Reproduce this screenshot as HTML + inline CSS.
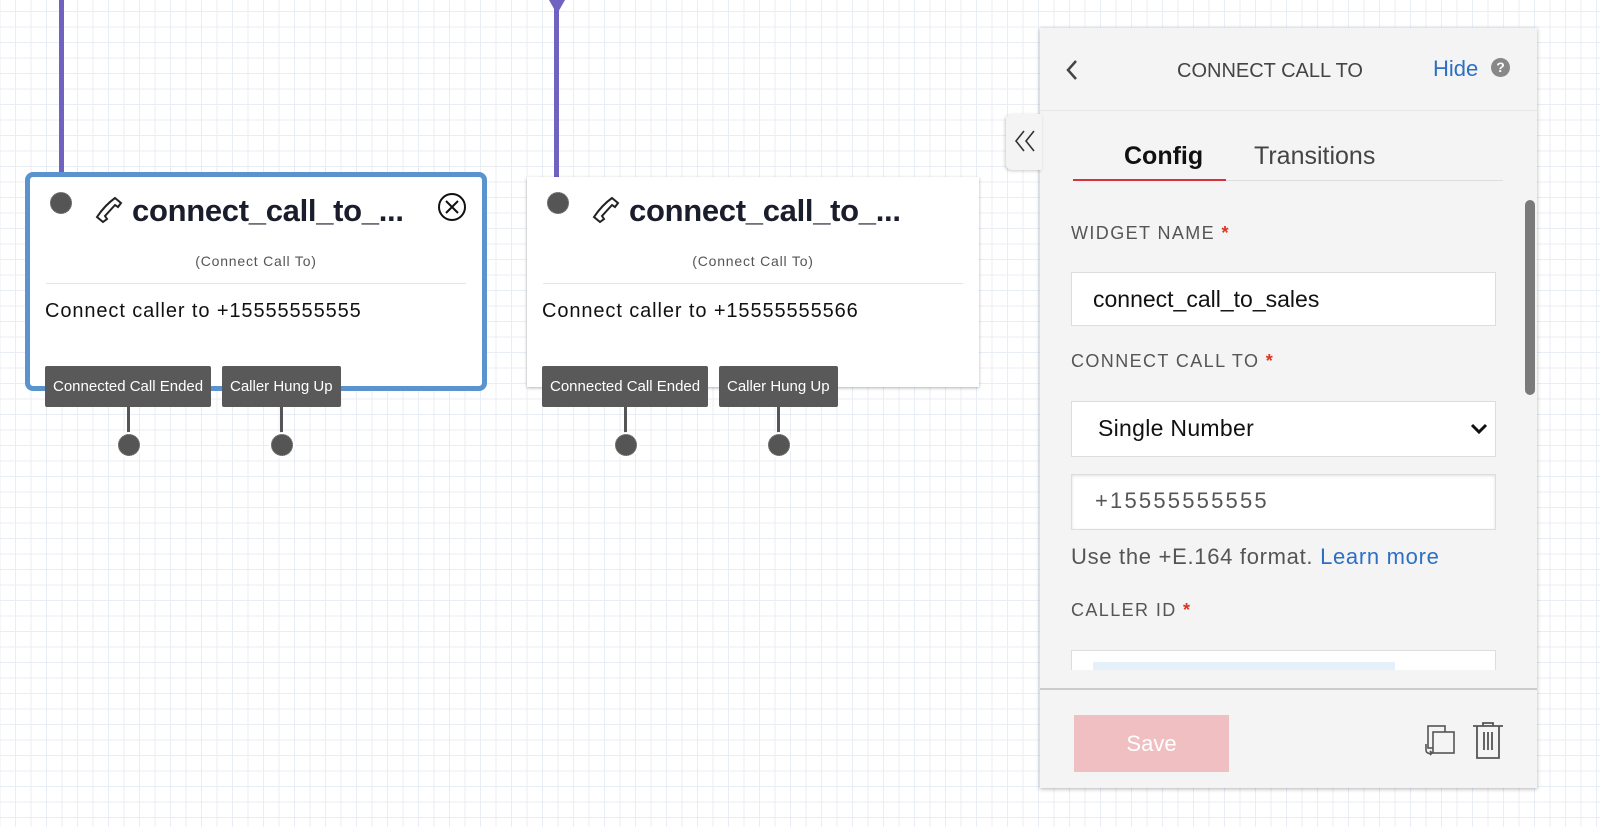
<!DOCTYPE html>
<html><head><meta charset="utf-8"><style>
*{box-sizing:border-box;margin:0;padding:0}
body{width:1600px;height:827px;overflow:hidden;position:relative;font-family:"Liberation Sans",sans-serif;background:#fff;
background-image:linear-gradient(#e9eef6 1px,transparent 1px),linear-gradient(90deg,#e9eef6 1px,transparent 1px);background-size:15.5px 15.5px;background-position:0 11px,15px 0}
.abs{position:absolute}
.node{position:absolute;background:#fff;box-shadow:0 1px 3px rgba(0,0,0,.3)}
.title{position:absolute;font-size:31px;font-weight:bold;color:#1a1d2b;letter-spacing:-.3px}
.sub{position:absolute;font-size:14px;color:#555;letter-spacing:.8px;width:100%;text-align:center}
.body{position:absolute;font-size:20px;color:#111;letter-spacing:.9px}
.tag{position:absolute;background:#595959;color:#fff;font-size:15px;height:41px;line-height:41px;padding:0 8px;border-radius:2px;white-space:nowrap}
.dot{position:absolute;width:22px;height:22px;border-radius:50%;background:#555;border:1px dotted #888;box-shadow:0 0 0 2px #fff}
.stem{position:absolute;width:3px;background:#555}
.lbl{position:absolute;left:1071px;font-size:18px;color:#555;letter-spacing:1.4px}
.lbl b{color:#d32;font-weight:bold}
.inp{position:absolute;left:1071px;width:425px;background:#fff;border:1px solid #ddd;font-size:22px;color:#111;white-space:nowrap}
</style></head><body>
<div class="abs" style="left:59px;top:0;width:5px;height:195px;background:#6f62c0"></div>
<div class="abs" style="left:554px;top:0;width:5px;height:185px;background:#6f62c0"></div>
<div class="abs" style="left:549px;top:0;width:0;height:0;border-left:8px solid transparent;border-right:8px solid transparent;border-top:14px solid #6f62c0"></div>

<!-- node 1 -->
<div class="node" style="left:25px;top:172px;width:462px;height:219px;border:5px solid #5b93cf;border-radius:8px;box-shadow:none"></div>
<div class="dot" style="left:50px;top:192px"></div>
<svg class="abs" style="left:95px;top:196px" width="30" height="28" viewBox="0 0 30 28" fill="none" stroke="#222" stroke-width="2"><path d="M20 2l6 5-3 4-3-2-10 11 2 3-4 3-6-5c6-9 11-14 18-19z"/></svg>
<div class="title" style="left:132px;top:193px">connect_call_to_...</div>
<svg class="abs" style="left:437px;top:192px" width="30" height="30" viewBox="0 0 30 30" fill="none" stroke="#111" stroke-width="2"><circle cx="15" cy="15" r="13"/><path d="M9 9l12 12M21 9L9 21"/></svg>
<div class="sub" style="left:25px;width:462px;top:253px">(Connect Call To)</div>
<div class="abs" style="left:46px;top:283px;width:420px;height:1px;background:#e5e5e5"></div>
<div class="body" style="left:45px;top:300px">Connect caller to +15555555555</div>
<div class="tag" style="left:45px;top:366px">Connected Call Ended</div>
<div class="tag" style="left:222px;top:366px">Caller Hung Up</div>
<div class="stem" style="left:127px;top:406px;height:30px"></div>
<div class="stem" style="left:280px;top:406px;height:30px"></div>
<div class="dot" style="left:118px;top:434px"></div>
<div class="dot" style="left:271px;top:434px"></div>

<!-- node 2 -->
<div class="node" style="left:527px;top:177px;width:452px;height:210px"></div>
<div class="dot" style="left:547px;top:192px"></div>
<svg class="abs" style="left:592px;top:196px" width="30" height="28" viewBox="0 0 30 28" fill="none" stroke="#222" stroke-width="2"><path d="M20 2l6 5-3 4-3-2-10 11 2 3-4 3-6-5c6-9 11-14 18-19z"/></svg>
<div class="title" style="left:629px;top:193px">connect_call_to_...</div>
<div class="sub" style="left:527px;width:452px;top:253px">(Connect Call To)</div>
<div class="abs" style="left:543px;top:283px;width:420px;height:1px;background:#e5e5e5"></div>
<div class="body" style="left:542px;top:300px">Connect caller to +15555555566</div>
<div class="tag" style="left:542px;top:366px">Connected Call Ended</div>
<div class="tag" style="left:719px;top:366px">Caller Hung Up</div>
<div class="stem" style="left:624px;top:406px;height:30px"></div>
<div class="stem" style="left:777px;top:406px;height:30px"></div>
<div class="dot" style="left:615px;top:434px"></div>
<div class="dot" style="left:768px;top:434px"></div>

<!-- panel -->
<div class="abs" style="left:1040px;top:28px;width:497px;height:760px;background:#f4f4f4;box-shadow:0 1px 4px rgba(0,0,0,.3)"></div>
<div class="abs" style="left:1006px;top:114px;width:36px;height:56px;background:#f4f4f4;border-radius:6px 0 0 6px;box-shadow:-1px 1px 3px rgba(0,0,0,.2)"></div>
<svg class="abs" style="left:1014px;top:129px" width="24" height="24" viewBox="0 0 24 24" fill="none" stroke="#333" stroke-width="1.6"><path d="M10 2L2 12l8 10M20 2l-8 10 8 10"/></svg>
<div class="abs" style="left:1040px;top:110px;width:497px;height:1px;background:#e6e6e6"></div>
<svg class="abs" style="left:1065px;top:58px" width="14" height="24" viewBox="0 0 14 24" fill="none" stroke="#444" stroke-width="2.5"><path d="M11 3L3 12l8 9"/></svg>
<div class="abs" style="left:1177px;top:60px;font-size:20px;color:#444">CONNECT CALL TO</div>
<div class="abs" style="left:1433px;top:56px;font-size:22px;color:#2d6fc4">Hide</div>
<div class="abs" style="left:1491px;top:58px;width:19px;height:19px;border-radius:50%;background:#888;color:#fff;font-size:14px;font-weight:bold;text-align:center;line-height:19px">?</div>
<div class="abs" style="left:1124px;top:142px;font-size:25px;color:#111;font-weight:bold">Config</div>
<div class="abs" style="left:1254px;top:142px;font-size:25px;color:#444">Transitions</div>
<div class="abs" style="left:1073px;top:180px;width:430px;height:1px;background:#ddd"></div>
<div class="abs" style="left:1073px;top:179px;width:153px;height:2px;background:#d8323c"></div>
<div class="abs" style="left:1525px;top:200px;width:10px;height:195px;border-radius:5px;background:#7a7a7a"></div>

<div class="lbl" style="top:223px">WIDGET NAME <b>*</b></div>
<div class="inp" style="top:272px;height:54px;padding:13px 21px;font-size:23px">connect_call_to_sales</div>
<div class="lbl" style="top:351px">CONNECT CALL TO <b>*</b></div>
<div class="inp" style="top:401px;height:56px;padding:13px 26px;font-size:23px;letter-spacing:.3px">Single Number</div>
<svg class="abs" style="left:1470px;top:422px" width="18" height="14" viewBox="0 0 18 14" fill="none" stroke="#111" stroke-width="3"><path d="M2 3l7 7 7-7"/></svg>
<div class="inp" style="top:474px;height:56px;padding:13px 23px;color:#555;letter-spacing:2.2px;box-shadow:inset 0 1px 3px rgba(0,0,0,.12)">+15555555555</div>
<div class="abs" style="left:1071px;top:544px;font-size:22px;color:#555;letter-spacing:.7px;white-space:nowrap">Use the +E.164 format. <span style="color:#2d6fc4">Learn more</span></div>
<div class="lbl" style="top:600px">CALLER ID <b>*</b></div>
<div class="inp" style="top:650px;height:20px;border-bottom:none"></div>
<div class="abs" style="left:1093px;top:662px;width:302px;height:8px;background:#e6f0fb"></div>
<div class="abs" style="left:1040px;top:688px;width:497px;height:2px;background:#ccc"></div>
<div class="abs" style="left:1074px;top:715px;width:155px;height:57px;background:#efbfc2;color:#fff;font-size:22px;text-align:center;line-height:57px">Save</div>
<svg class="abs" style="left:1420px;top:722px" width="36" height="36" viewBox="0 0 36 36" fill="none" stroke="#555" stroke-width="1.6"><rect x="8" y="4" width="17" height="22"/><rect x="13" y="10" width="21" height="21" fill="#f4f4f4"/><path d="M6 22v6c0 3 3 4 6 3M10 29l2 2-2 2"/></svg>
<svg class="abs" style="left:1471px;top:720px" width="34" height="40" viewBox="0 0 34 40" fill="none" stroke="#555" stroke-width="1.8"><path d="M2 6h30M12 6V3h10v3M6 6v32h22V6M13 12v18M17 12v18M21 12v18"/></svg>
</body></html>
